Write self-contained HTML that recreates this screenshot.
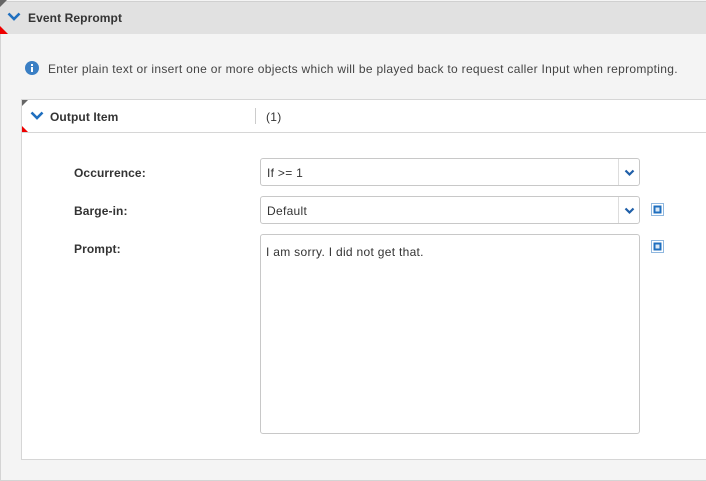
<!DOCTYPE html>
<html><head><style>
*{margin:0;padding:0;box-sizing:border-box}
body{width:706px;height:481px;background:#fff;font-family:"Liberation Sans",sans-serif;font-size:12px;color:#333;position:relative;overflow:hidden}
.outer{position:absolute;left:0;top:0;width:706px;height:481px;background:#f4f4f4;border-left:1px solid #d4d4d4;border-bottom:1px solid #d4d4d4}
.hdr{position:absolute;left:0;top:1px;width:706px;height:33px;background:#e1e1e1;border-top:1px solid #d0d0d0}
.t{position:absolute;font-size:12px;letter-spacing:0.3px}
.b{font-weight:bold;color:#333;letter-spacing:0.1px}
.inner{position:absolute;left:21px;top:99px;width:686px;height:361px;background:#fff;border:1px solid #d6d6d6}
.ihdr{position:absolute;left:0;top:0;width:100%;height:33px;border-bottom:1px solid #d6d6d6}
.sel{position:absolute;left:260px;width:380px;height:28px;border:1px solid #c8c8c8;border-radius:3px;background:#fff}
.sel .dd{position:absolute;right:0;top:0;width:21px;height:26px;border-left:1px solid #ddd}
.ta{position:absolute;left:260px;top:234px;width:380px;height:200px;border:1px solid #c8c8c8;border-radius:3px;background:#fff}
</style></head><body>
<div class="outer"></div>
<div class="hdr"></div>
<svg style="position:absolute;left:0;top:0" width="8" height="8"><polygon points="0,0 7,0 0,7" fill="#666"/></svg>
<svg style="position:absolute;left:0;top:26px" width="8" height="8"><polygon points="0,8 8,8 0,0" fill="#e00"/></svg>
<svg style="position:absolute;left:7px;top:12px" width="14" height="10"><polyline points="1.5,1.5 7,7 12.5,1.5" fill="none" stroke="#1f6fbf" stroke-width="2.6"/></svg>
<div class="t b" style="left:28px;top:11px">Event Reprompt</div>
<svg style="position:absolute;left:25px;top:61px" width="14" height="14"><circle cx="7" cy="7" r="7" fill="#3a7fc4"/><rect x="6" y="6" width="2" height="5" fill="#fff"/><rect x="6" y="3" width="2" height="2" fill="#fff"/></svg>
<div class="t" style="left:48px;top:62px;color:#444">Enter plain text or insert one or more objects which will be played back to request caller Input when reprompting.</div>
<div class="inner"><div class="ihdr"></div></div>
<svg style="position:absolute;left:22px;top:100px" width="6" height="6"><polygon points="0,0 6,0 0,6" fill="#666"/></svg>
<svg style="position:absolute;left:22px;top:126px" width="6" height="6"><polygon points="0,6 6,6 0,0" fill="#e00"/></svg>
<svg style="position:absolute;left:30px;top:111px" width="14" height="10"><polyline points="1.5,1.5 7,7 12.5,1.5" fill="none" stroke="#1f6fbf" stroke-width="2.6"/></svg>
<div class="t b" style="left:50px;top:110px">Output Item</div>
<div style="position:absolute;left:255px;top:108px;width:1px;height:16px;background:#ccc"></div>
<div class="t" style="left:266px;top:110px">(1)</div>
<div class="t b" style="left:74px;top:166px">Occurrence:</div>
<div class="t b" style="left:74px;top:204px">Barge-in:</div>
<div class="t b" style="left:74px;top:242px">Prompt:</div>
<div class="sel" style="top:158px"><div class="t" style="left:6px;top:7px">If &gt;= 1</div><div class="dd"><svg style="position:absolute;left:5px;top:10px" width="11" height="8"><polyline points="1.5,1.5 5.5,5.5 9.5,1.5" fill="none" stroke="#1f5fa8" stroke-width="2.2"/></svg></div></div>
<div class="sel" style="top:196px"><div class="t" style="left:6px;top:7px">Default</div><div class="dd"><svg style="position:absolute;left:5px;top:10px" width="11" height="8"><polyline points="1.5,1.5 5.5,5.5 9.5,1.5" fill="none" stroke="#1f5fa8" stroke-width="2.2"/></svg></div></div>
<svg style="position:absolute;left:651px;top:203px" width="13" height="13"><rect x="0.5" y="0.5" width="12" height="12" fill="none" stroke="#1f6fbf" stroke-dasharray="1,1"/><rect x="3.5" y="3.5" width="6" height="6" fill="#dbe8f6" stroke="#1f6fbf" stroke-width="2"/></svg>
<div class="ta"><div class="t" style="left:5px;top:10px">I am sorry. I did not get that.</div></div>
<svg style="position:absolute;left:651px;top:240px" width="13" height="13"><rect x="0.5" y="0.5" width="12" height="12" fill="none" stroke="#1f6fbf" stroke-dasharray="1,1"/><rect x="3.5" y="3.5" width="6" height="6" fill="#dbe8f6" stroke="#1f6fbf" stroke-width="2"/></svg>
</body></html>
